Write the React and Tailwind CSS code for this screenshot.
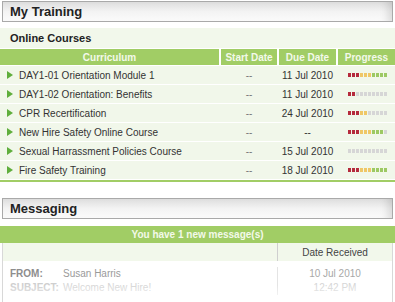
const courses = [
  { name: "DAY1-01 Orientation Module 1", start: "--", due: "11 Jul 2010", bar: [3, 3, 4, 0] },
  { name: "DAY1-02 Orientation: Benefits", start: "--", due: "11 Jul 2010", bar: [2, 0, 0, 8] },
  { name: "CPR Recertification", start: "--", due: "24 Jul 2010", bar: [3, 2, 0, 5] },
  { name: "New Hire Safety Online Course", start: "--", due: "--", bar: [3, 3, 3, 1] },
  { name: "Sexual Harrassment Policies Course", start: "--", due: "15 Jul 2010", bar: [0, 0, 0, 10] },
  { name: "Fire Safety Training", start: "--", due: "18 Jul 2010", bar: [3, 3, 4, 0] },
];

const segColors = ["bg-[#b52a3c]", "bg-[#efc766]", "bg-[#9dc963]", "bg-[#d6d6d6]"];

const ProgressBar = ({ bar }) => {
  const segs = [];
  bar.forEach((count, i) => {
    for (let k = 0; k < count; k++) segs.push(segColors[i]);
  });
  return (
    <div className="flex gap-px">
      {segs.map((c, i) => (
        <div key={i} className={`w-[3px] h-[4px] ${c}`}></div>
      ))}
    </div>
  );
};

const SectionHeader = ({ title }) => (
  <div className="mx-[2px] h-[21px] flex items-center pl-[7px] border border-[#a9a9a9] bg-gradient-to-b from-[#dedede] via-[#f3f3f3] to-[#fbfbfb] shadow-[inset_-10px_0_8px_-6px_rgba(0,0,0,0.12)]">
    <h2 className="text-[13px] font-bold text-[#222]">{title}</h2>
  </div>
);

const Arrow = () => (
  <svg width="6" height="8" viewBox="0 0 6 8" className="shrink-0">
    <polygon points="0,0 6,4 0,8" fill="#5fae3c" />
  </svg>
);

export default function App() {
  return (
    <div
      className="w-[395px] h-[302px] overflow-hidden bg-white pt-[1px]"
      style={{ fontFamily: '"Liberation Sans", Arial, sans-serif' }}
    >
      <SectionHeader title="My Training" />

      <div className="mt-[6px] h-[20px] flex items-center pl-[10px] bg-[#f2f8eb]">
        <h3 className="text-[11px] font-bold text-[#222]">Online Courses</h3>
      </div>

      <div className="mt-px grid grid-cols-[219px_56px_57px_1fr] gap-x-[2px] h-[16px] text-[10px] font-bold text-[#f3f9ea]">
        <div className="bg-[#a1cd65] flex items-center justify-center">Curriculum</div>
        <div className="bg-[#a1cd65] flex items-center justify-center">Start Date</div>
        <div className="bg-[#a1cd65] flex items-center justify-center">Due Date</div>
        <div className="bg-[#a1cd65] flex items-center justify-center">Progress</div>
      </div>

      <div className="flex flex-col gap-px mt-px">
        {courses.map((c) => (
          <div
            key={c.name}
            className="grid grid-cols-[219px_56px_57px_1fr] gap-x-[2px] h-[18px] bg-[#f1f7ea] text-[10px] text-[#333]"
          >
            <div className="flex items-center gap-[6px] pl-[7px]">
              <Arrow />
              <span>{c.name}</span>
            </div>
            <div className="flex items-center justify-center text-[#777]">{c.start}</div>
            <div className="flex items-center justify-center">{c.due}</div>
            <div className="flex items-center justify-center pl-[2px]">
              <ProgressBar bar={c.bar} />
            </div>
          </div>
        ))}
      </div>
      <div className="h-[2px] bg-[#a1cd65] mt-px"></div>

      <div className="mt-[16px]">
        <SectionHeader title="Messaging" />
      </div>

      <div className="mt-[7px] h-[17px] bg-[#a1cd65] flex items-center justify-center text-[10px] font-bold text-[#f3f9ea]">
        You have 1 new message(s)
      </div>

      <div className="relative mx-[2px] border-x border-[#d8d8d8]">
        <div className="grid grid-cols-[275px_1fr] h-[18px] bg-[#f2f8eb]">
          <div className="border-r border-[#cfcfcf]"></div>
          <div className="flex items-center justify-center text-[10px] text-[#444]">Date Received</div>
        </div>
        <div className="grid grid-cols-[275px_1fr] pt-[6px] pb-[10px]">
          <div className="border-r border-[#e4e4e4] pl-[7px] text-[10px] leading-[14px]">
            <div className="flex">
              <span className="w-[53px] font-bold text-[#8d8d8d]">FROM:</span>
              <span className="text-[#9a9a9a]">Susan Harris</span>
            </div>
            <div className="flex">
              <span className="w-[53px] font-bold text-[#cfcfcf]">SUBJECT:</span>
              <span className="text-[#d6d6d6]">Welcome New Hire!</span>
            </div>
          </div>
          <div className="flex flex-col items-center text-[10px] leading-[14px]">
            <span className="text-[#a8a8a8]">10 Jul 2010</span>
            <span className="text-[#d6d6d6]">12:42 PM</span>
          </div>
        </div>
        <div className="absolute left-0 right-0 bottom-0 h-[20px] bg-gradient-to-b from-white/0 to-white pointer-events-none"></div>
      </div>
    </div>
  );
}
